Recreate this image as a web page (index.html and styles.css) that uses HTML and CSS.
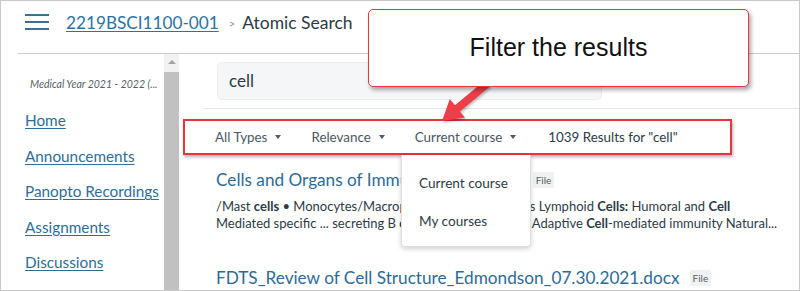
FILE: index.html
```html
<!DOCTYPE html>
<html>
<head>
<meta charset="utf-8">
<link rel="stylesheet" href="styles.css">
</head>
<body>
<div class="frame">
  <header class="header">
    <svg class="burger" width="24" height="16" viewBox="0 0 24 16"><rect x="0" y="0" width="24" height="2" fill="#3a7193"/><rect x="0" y="7" width="24" height="2" fill="#3a7193"/><rect x="0" y="14" width="24" height="2" fill="#3a7193"/></svg>
    <a class="crumb" href="#">2219BSCI1100-001</a>
    <span class="sep">&gt;</span>
    <span class="page-title">Atomic Search</span>
  </header>
  <div class="body">
    <nav class="sidebar">
      <div class="term">Medical Year 2021 - 2022 (...</div>
      <a href="#">Home</a>
      <a href="#">Announcements</a>
      <a href="#">Panopto Recordings</a>
      <a href="#">Assignments</a>
      <a href="#">Discussions</a>
    </nav>
    <div class="scrollbar"><div class="sb-track"><span class="sb-arrow"></span></div><div class="sb-thumb"></div></div>
    <main class="main">
      <div class="search-row"><div class="search">cell</div></div>
      <div class="filters">
        <span class="filter">All Types<i class="caret"></i></span>
        <span class="filter">Relevance<i class="caret"></i></span>
        <span class="filter">Current course<i class="caret"></i></span>
        <span class="count">1039 Results for "cell"</span>
      </div>
      <div class="results">
        <div class="result">
          <div class="title-row"><a class="rtitle" href="#">Cells and Organs of Immune System.pptx</a><span class="badge">File</span></div>
          <p class="snippet">/Mast <b>cells</b> • Monocytes/Macrophages • Dendritic <b>cel</b>ls Lymphoid <b>Cells:</b> Humoral and <b>Cell</b><br>Mediated specific ... secreting B <b>cells</b> ... Innate Immune, Adaptive <b>Cell</b>-mediated immunity Natural...</p>
        </div>
        <div class="result second">
          <div class="title-row"><a class="rtitle" href="#">FDTS_Review of Cell Structure_Edmondson_07.30.2021.docx</a><span class="badge">File</span></div>
        </div>
      </div>
      <div class="dropdown">
        <div class="dd-item">Current course</div>
        <div class="dd-item">My courses</div>
      </div>
    </main>
  </div>
  <svg class="arrow" width="70" height="60" viewBox="0 0 70 60"><polygon points="60.5,16.1 29.9,41.4 35,47.6 12,51 19.8,29 24.9,35.2 55.5,9.9" fill="#ee3e47"/></svg>
  <div class="callout">Filter the results</div>
</div>
</body>
</html>
```
FILE: styles.css
```css
* { box-sizing: border-box; }
body { margin: 0; font-family: Lato, "Noto Sans", sans-serif; color: #2d3b45; }
.frame {
  position: relative;
  width: 800px;
  height: 291px;
  border: 1px solid #c9c9c9;
  overflow: hidden;
  background: #fff;
}
.header {
  display: flex;
  align-items: center;
  height: 53px;
  margin-left: 17px;
  padding: 0 0 10px 7px;
  border-bottom: 1px solid #c7cdd1;
}
.burger { margin-right: 17px; margin-top: 0; }
.crumb { font-size: 17.2px; color: #2b73a6; text-decoration: underline; text-underline-offset: 2px; }
.sep { font-size: 11px; color: #8b969e; margin: 2px 7px 0 10px; }
.page-title { font-size: 17.5px; color: #2d3b45; }
.body { display: flex; height: 236px; }
.sidebar {
  width: 163px;
  display: flex;
  flex-direction: column;
  padding: 24px 0 0 24px;
  white-space: nowrap;
}
.term { font-size: 10.5px; font-style: italic; color: #555f66; margin: 0 0 20px 5px; }
.sidebar a { font-size: 15.3px; color: #2c6e98; text-decoration: underline; text-underline-offset: 2px; line-height: 20px; margin-bottom: 15.5px; }
.scrollbar { width: 15px; display: flex; flex-direction: column; }
.sb-track { height: 18px; background: #f1f1f1; display: flex; justify-content: center; padding-top: 6px; }
.sb-arrow { width: 0; height: 0; border-left: 4px solid transparent; border-right: 4px solid transparent; border-bottom: 4px solid #a3a3a3; }
.sb-thumb { flex: 1; background: #c1c1c1; }
.main { position: relative; flex: 1; padding-left: 4px; }
.search-row {
  margin-left: 21px;
  padding: 8px 0 8px 13px;
  border-bottom: 1px solid #e4e7e9;
}
.search {
  width: 385px;
  height: 38px;
  background: #f5f6f7;
  border: 1px solid #eceef0;
  border-radius: 5px;
  font-size: 17px;
  padding: 7px 0 0 11px;
}
.filters {
  display: flex;
  align-items: center;
  gap: 30px;
  width: 549px;
  height: 36px;
  margin-top: 10px;
  padding-left: 30px;
  border: 2px solid #e2373f;
  box-shadow: 1px 2px 3px rgba(0,0,0,0.3);
  font-size: 13.4px;
  color: #4a5863;
}
.filter { display: flex; align-items: center; }
.caret { display: inline-block; width: 0; height: 0; margin-left: 8px; border-left: 3.5px solid transparent; border-right: 3.5px solid transparent; border-top: 4px solid #4a5863; }
.count { color: #2d3b45; margin-left: 2px; }
.results { padding: 14px 0 0 33px; }
.title-row { display: flex; align-items: center; gap: 8px; }
.rtitle { font-size: 17.2px; color: #2d6b97; text-decoration: none; line-height: 22px; }
.badge { font-size: 10px; background: #f0f1f2; color: #555f66; padding: 2px 3px; border-radius: 2px; }
.snippet { margin: 7px 0 0; font-size: 13px; line-height: 17px; white-space: nowrap; }
.snippet b { font-weight: 700; }
.second { margin-top: 35px; }
.second .badge { margin-left: 2px; }
.dropdown {
  position: absolute;
  top: 101px;
  left: 222px;
  width: 130px;
  height: 92px;
  background: #fff;
  border: 1px solid #dcdfe1;
  border-top: none;
  border-radius: 0 0 4px 4px;
  box-shadow: 0 2px 5px rgba(0,0,0,0.18);
  padding: 19px 0 0 17px;
}
.dd-item { font-size: 13.6px; color: #2d3b45; line-height: 18px; margin-bottom: 20px; }
.callout {
  position: absolute;
  left: 367px;
  top: 8px;
  width: 381px;
  height: 78px;
  background: #fff;
  border: 1.5px solid #e5393f;
  border-radius: 5px;
  box-shadow: 2px 3px 4px rgba(0,0,0,0.35);
  display: flex;
  align-items: center;
  justify-content: center;
  font-family: "Liberation Sans", Arial, sans-serif;
  font-size: 25px;
  color: #111;
  padding-bottom: 1px;
}
.arrow { position: absolute; left: 429px; top: 69px; filter: drop-shadow(1px 2px 1px rgba(0,0,0,0.25)); }
```
